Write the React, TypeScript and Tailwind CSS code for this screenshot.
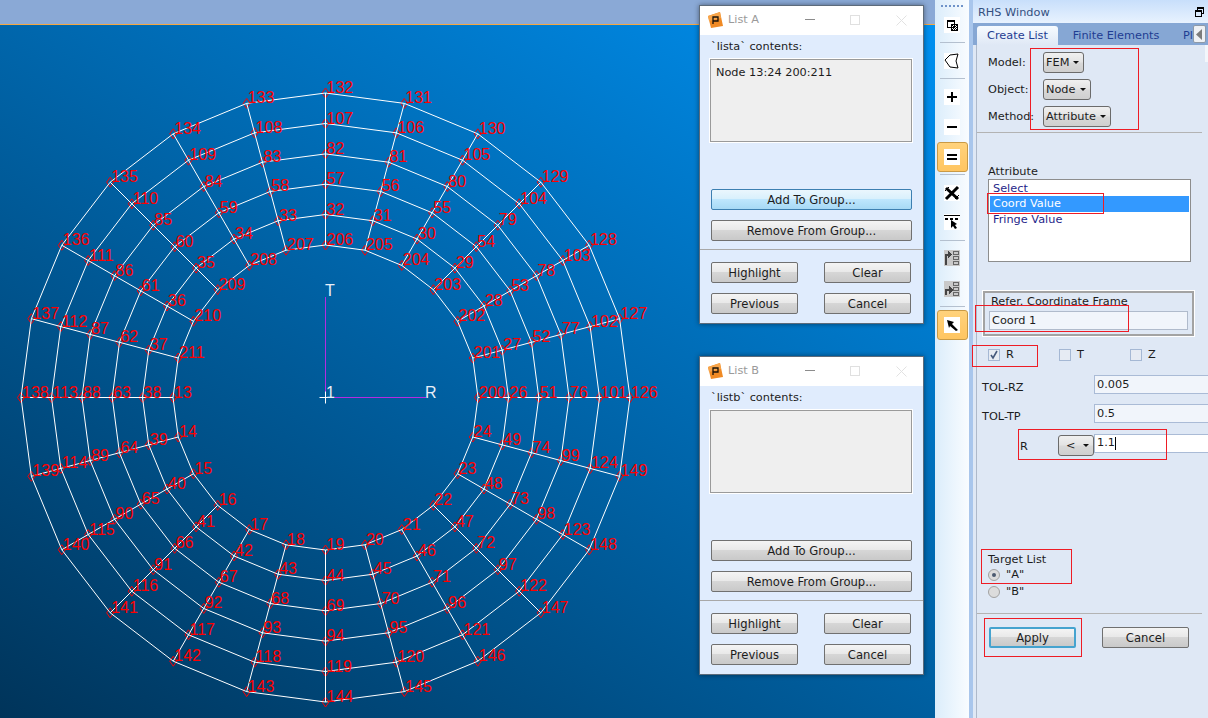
import type { ReactNode } from 'react'

const CX = 325.5
const CY = 397.5
const RADII = [152.5, 183, 213.3, 243.6, 274, 304.5]
const RING_START = [200, 26, 51, 76, 101, 126]

function nodeLabel(ring: number, k: number) {
  if (ring === 0 && k >= 12) return k + 1
  return RING_START[ring] + k
}

function nodeAt(ring: number, k: number) {
  const a = (k * 15 * Math.PI) / 180
  return { x: CX + RADII[ring] * Math.cos(a), y: CY - RADII[ring] * Math.sin(a) }
}

function Mesh() {
  const angles = Array.from({ length: 24 }, (_, k) => k)
  return (
    <svg className="block w-full h-full" viewBox="0 25 935 693">
      {/* node markers sit under the mesh lines */}
      {RADII.map((_, ring) =>
        angles.map((k) => {
          const p = nodeAt(ring, k)
          return (
            <polygon
              key={`d${ring}-${k}`}
              points={`${p.x - 3.5},${p.y} ${p.x},${p.y - 5} ${p.x + 3.5},${p.y} ${p.x},${p.y + 5}`}
              fill="none"
              stroke="#ff0000"
            />
          )
        }),
      )}
      {RADII.map((_, ring) => (
        <polygon
          key={`r${ring}`}
          points={angles.map((k) => `${nodeAt(ring, k).x},${nodeAt(ring, k).y}`).join(' ')}
          fill="none"
          stroke="#ffffff"
          strokeWidth="1"
        />
      ))}
      {angles.map((k) => {
        const a = nodeAt(0, k)
        const b = nodeAt(5, k)
        return <line key={`s${k}`} x1={a.x} y1={a.y} x2={b.x} y2={b.y} stroke="#ffffff" strokeWidth="1" />
      })}
      {RADII.map((_, ring) =>
        angles.map((k) => {
          const p = nodeAt(ring, k)
          return (
            <text
              key={`t${ring}-${k}`}
              x={p.x + 1}
              y={p.y}
              fill="#ff0000"
              fontSize="16"
              fontFamily="'Liberation Sans', sans-serif"
            >
              {nodeLabel(ring, k)}
            </text>
          )
        }),
      )}
      <line x1={CX} y1={CY} x2={CX} y2={297} stroke="#b52be0" strokeWidth="1" />
      <line x1={CX} y1={CY} x2={426} y2={CY} stroke="#b52be0" strokeWidth="1" />
      <line x1={CX - 6} y1={CY} x2={CX + 6} y2={CY} stroke="#ffffff" strokeWidth="1" />
      <line x1={CX} y1={CY - 6} x2={CX} y2={CY + 6} stroke="#ffffff" strokeWidth="1" />
      <g fill="#e8eef8" fontSize="16" fontFamily="'Liberation Sans', sans-serif">
        <text x={325} y={296}>T</text>
        <text x={425} y={398}>R</text>
        <text x={326} y={398}>1</text>
      </g>
    </svg>
  )
}

function GrayButton({ children, className }: { children: ReactNode; className: string }) {
  return (
    <div
      className={`h-[21px] flex items-center justify-center pt-[2px] text-[11.6px] rounded-[2px] border border-[#707070] bg-[linear-gradient(#f4f4f4_0%,#e9e9e9_45%,#d6d6d6_50%,#c9c9c9_100%)] text-[#1c1c1c] ${className}`}
    >
      {children}
    </div>
  )
}

function Logo() {
  return (
    <svg width="17" height="17" viewBox="0 0 17 17">
      <polygon points="1,4 13,0 16,14 4,16" fill="#f08a24" />
      <polygon points="1,4 13,0 14,6 2,9" fill="#f8a54a" />
      <path d="M6 12V5h5v4H6" fill="none" stroke="#1a1208" strokeWidth="1.3" />
    </svg>
  )
}

function ListDialog({
  title,
  name,
  contents,
  top,
  hot,
}: {
  title: string
  name: string
  contents: string
  top: string
  hot: boolean
}) {
  return (
    <div className={`absolute left-[699px] ${top} w-[225px] h-[319px] border border-[#5d6b7a] bg-[#e0ecfd] shadow-[0_0_5px_rgba(0,0,0,0.45)]`}>
      <div className="h-[29px] bg-white flex items-center pl-[7px] relative">
        <Logo />
        <span className="ml-[4px] text-[#9a9a9a]">{title}</span>
        <span className="absolute left-[105px] top-[13px] w-[10px] h-px bg-[#8c8c8c]" />
        <span className="absolute left-[150px] top-[9px] w-[10px] h-[10px] border border-[#e0e0e0]" />
        <svg className="absolute left-[196px] top-[9px]" width="11" height="11" viewBox="0 0 11 11">
          <path d="M0.5 0.5L10.5 10.5M10.5 0.5L0.5 10.5" stroke="#e2e2e2" />
        </svg>
      </div>
      <div className="h-[24px] flex items-center pt-[1px] pl-[11px] text-[#1c1c1c]">{`\`${name}\` contents:`}</div>
      <div className="ml-[10px] w-[202px] h-[83px] border border-[#9a9a9a] bg-[#efefef] px-[5px] pt-[5px] text-[#1c1c1c] shadow-[0_0_0_1px_#ffffff]">
        {contents}
      </div>
      {hot ? (
        <div className="mt-[47px] ml-[11px] w-[201px] h-[21px] flex items-center justify-center pt-[2px] text-[11.6px] rounded-[2px] border border-[#3c7fb1] bg-[linear-gradient(#eaf6fd_0%,#d9f0fc_45%,#bee6fd_50%,#a7d9f5_100%)] text-[#1c1c1c]">
          Add To Group...
        </div>
      ) : (
        <GrayButton className="mt-[47px] ml-[11px] w-[201px]">Add To Group...</GrayButton>
      )}
      <GrayButton className="mt-[10px] ml-[11px] w-[201px]">Remove From Group...</GrayButton>
      <div className="mt-[8px] h-px bg-[#a8a8a8]" />
      <div className="mt-[12px] ml-[11px] grid grid-cols-[87px_87px] gap-x-[26px] gap-y-[10px]">
        <GrayButton className="w-[87px]">Highlight</GrayButton>
        <GrayButton className="w-[87px]">Clear</GrayButton>
        <GrayButton className="w-[87px]">Previous</GrayButton>
        <GrayButton className="w-[87px]">Cancel</GrayButton>
      </div>
    </div>
  )
}

function Tool({ children, active, className, gray }: { children: ReactNode; active?: boolean; className: string; gray?: boolean }) {
  return (
    <div
      className={`w-[31px] flex items-center justify-center ${className} ${
        active ? 'rounded-[3px] border border-[#c99a45] bg-[linear-gradient(#ffd27c,#ffc561)]' : ''
      }`}
    >
      <svg width="16" height="16" viewBox="0 0 16 16" shapeRendering="crispEdges">
        <rect width="16" height="16" fill={gray ? '#c9c9c9' : '#ffffff'} />
        {children}
      </svg>
    </div>
  )
}

function ToolSep({ className }: { className: string }) {
  return <div className={`w-[25px] h-px bg-[#b4c0cf] ${className}`} />
}

function Toolbar() {
  return (
    <div className="w-[34px] flex flex-col items-center bg-[linear-gradient(90deg,#dbedfb,#f9fcff)]">
      <div className="h-[10px] flex items-center gap-[2px] pt-[1px]">
        {[0, 1, 2, 3, 4, 5].map((i) => (
          <span key={i} className="w-[2px] h-[2px] bg-[#6f93c9]" />
        ))}
      </div>
      <Tool className="h-[30px]">
        <defs>
          <pattern id="dith" width="2" height="2" patternUnits="userSpaceOnUse">
            <rect width="1" height="1" fill="#000" />
            <rect x="1" y="1" width="1" height="1" fill="#000" />
          </pattern>
        </defs>
        <rect x="3.5" y="3.5" width="7" height="7" fill="none" stroke="#000" />
        <rect x="4" y="4" width="6" height="1" fill="#000" />
        <rect x="7" y="7" width="6" height="6" fill="url(#dith)" stroke="#000" />
      </Tool>
      <ToolSep className="mt-[2px]" />
      <Tool className="h-[30px] mt-[3px]">
        <polygon points="1,7 6,2 14,1 12,8 14,15 6,14" fill="none" stroke="#000" shapeRendering="auto" />
      </Tool>
      <ToolSep className="mt-[2px]" />
      <Tool className="h-[30px] mt-[3px]">
        <rect x="3" y="7" width="10" height="2" fill="#000" />
        <rect x="7" y="3" width="2" height="10" fill="#000" />
      </Tool>
      <Tool className="h-[30px]">
        <rect x="3" y="7" width="10" height="2" fill="#000" />
      </Tool>
      <Tool className="h-[30px]" active>
        <rect x="3" y="5" width="10" height="2" fill="#000" />
        <rect x="3" y="9" width="10" height="2" fill="#000" />
      </Tool>
      <ToolSep className="mt-[2px]" />
      <Tool className="h-[29px] mt-[3px]">
        <path d="M2 3L14 14M14 2L2 14" stroke="#000" strokeWidth="3" shapeRendering="auto" />
        <path d="M1 6L5 2M11 14L15 10" stroke="#000" strokeWidth="1" shapeRendering="auto" />
      </Tool>
      <Tool className="h-[30px]">
        <rect x="0" y="1" width="16" height="1" fill="#000" />
        <rect x="1" y="4" width="3" height="2" fill="#000" />
        <rect x="6" y="4" width="3" height="2" fill="#000" />
        <rect x="11" y="4" width="3" height="2" fill="#000" />
        <polygon points="7,6 7,14 9,12 11,15 13,14 11,11 13,10" fill="#000" shapeRendering="auto" />
      </Tool>
      <ToolSep className="mt-[3px]" />
      <Tool className="h-[30px] mt-[2px]" gray>
        <path d="M2 15V5h3" fill="none" stroke="#444" strokeWidth="2" />
        <polygon points="4,1 8,5 4,8" fill="#444" />
        <rect x="9.5" y="1.5" width="5" height="3" fill="none" stroke="#666" />
        <rect x="9.5" y="6.5" width="5" height="3" fill="none" stroke="#666" />
        <rect x="9.5" y="11.5" width="5" height="3" fill="none" stroke="#666" />
      </Tool>
      <Tool className="h-[30px] mt-[1px]" gray>
        <path d="M2 14V9h4" fill="none" stroke="#444" strokeWidth="2" />
        <polygon points="5,5 9,9 5,13" fill="#444" />
        <rect x="9.5" y="1.5" width="5" height="3" fill="none" stroke="#666" />
        <rect x="9.5" y="6.5" width="5" height="3" fill="none" stroke="#666" />
        <rect x="9.5" y="11.5" width="5" height="3" fill="none" stroke="#666" />
      </Tool>
      <ToolSep className="mt-[2px]" />
      <Tool className="h-[30px] mt-[3px]" active>
        <polygon points="3,3 10,5 8,7 14,13 12,14 6,9 5,11" fill="#000" shapeRendering="auto" />
      </Tool>
    </div>
  )
}

function Caret() {
  return (
    <svg width="6" height="3" viewBox="0 0 6 3">
      <polygon points="0,0 6,0 3,3" fill="#111" />
    </svg>
  )
}

function Select({ children, className }: { children: ReactNode; className: string }) {
  return (
    <div
      className={`h-[21px] flex items-center justify-between pl-[2px] pr-[4px] rounded-[3px] border border-[#6b6b6b] bg-[linear-gradient(#f0f0f0,#e4e4e4_45%,#d8d8d8_55%,#cfcfcf)] text-[#1c1c1c] ${className}`}
    >
      <span className="pt-[1px]">{children}</span>
      <Caret />
    </div>
  )
}

function FormRow({ label, children, className }: { label: string; children: ReactNode; className?: string }) {
  return (
    <div className={`flex items-center h-[21px] ${className ?? ''}`}>
      <span className="w-[55px] pt-[1px] text-[#1c1c1c]">{label}</span>
      {children}
    </div>
  )
}

function Check({ label, checked }: { label: string; checked?: boolean }) {
  return (
    <div className="w-[71px] flex items-center">
      <span className="w-[12px] h-[12px] border border-[#a5b8d4] bg-[#e6ebf3] flex items-center justify-center">
        {checked && (
          <svg width="10" height="10" viewBox="0 0 10 10">
            <path d="M2 5l2 3 4-7" fill="none" stroke="#44587c" strokeWidth="1.6" />
          </svg>
        )}
      </span>
      <span className="ml-[6px] pt-[1px] text-[#1c1c1c]">{label}</span>
    </div>
  )
}

function Radio({ label, on }: { label: string; on?: boolean }) {
  return (
    <div className="h-[17px] flex items-center">
      <span className="w-[12px] h-[12px] rounded-full border border-[#a2a2a2] bg-[#dcdcdc] flex items-center justify-center">
        {on && <span className="w-[4px] h-[4px] rounded-full bg-[#4c5a70]" />}
      </span>
      <span className="ml-[6px] pt-[2px] text-[#1c1c1c]">{label}</span>
    </div>
  )
}

function RhsPanel() {
  return (
    <div className="flex-1 min-w-0 flex flex-col bg-[#dfe8f5] relative overflow-hidden">
      <div className="h-[23px] flex items-center justify-between pl-[5px] pr-[4px] bg-[linear-gradient(#c8dffb,#e8f2fe)] text-[#34507f]">
        <span className="pt-[3px]">RHS Window</span>
        <svg width="9" height="10" viewBox="0 0 9 10" shapeRendering="crispEdges">
          <path d="M2.5 2.5V0.5H8.5V6.5H6.5M0.5 3.5H6.5V9.5H0.5Z" fill="none" stroke="#000" />
          <rect x="2" y="0" width="7" height="2" fill="#000" />
          <rect x="0" y="3" width="7" height="2" fill="#000" />
        </svg>
      </div>
      <div className="h-[22px] bg-[#86a7d4] flex items-end pl-[4px] text-[#1f3d92] whitespace-nowrap">
        <div className="w-[81px] h-[19px] pt-[2px] rounded-t-[3px] bg-[linear-gradient(#f7fbff,#dfe8f5)] flex items-center justify-center">
          Create List
        </div>
        <div className="ml-[15px] w-[86px] h-[19px] pt-[2px] flex items-center justify-center">Finite Elements</div>
        <div className="ml-[24px] h-[19px] pt-[2px] flex items-center">Pl</div>
      </div>
      <div className="absolute left-[220px] top-[25px] w-[13px] h-[18px] rounded-[2px] border border-[#8e9aa8] bg-[#eef1f5] flex items-center justify-center">
        <svg width="7" height="11" viewBox="0 0 7 11">
          <polygon points="6,0 6,11 0,5.5" fill="#7c7c7c" />
        </svg>
      </div>
      <div className="absolute right-0 top-[45px] w-[3px] h-[17px] bg-[#f3f6fb]" />

      <div className="flex-1 ml-[3px] border-l border-[#aeb9ca] flex flex-col text-[#1c1c1c]">
        <div className="pt-[7px] pl-[11px] flex flex-col gap-[6px]">
          <FormRow label="Model:">
            <Select className="w-[41px]">FEM</Select>
          </FormRow>
          <FormRow label="Object:">
            <Select className="w-[48px]">Node</Select>
          </FormRow>
          <FormRow label="Method:">
            <Select className="w-[68px]">Attribute</Select>
          </FormRow>
        </div>
        <div className="mt-[5px] mr-[6px] h-px bg-[#b3b3b3]" />

        <div className="mt-[31px] ml-[11px] h-[14px] leading-[14px] pt-[1px]">Attribute</div>
        <div className="mt-[1px] ml-[11px] w-[203px] h-[83px] border border-[#8d8d8d] bg-white pt-[1px] px-[1px] text-[#1f1f8a]">
          <div className="h-[15px] leading-[15px] pl-[3px]">Select</div>
          <div className="h-[16px] leading-[15px] pl-[3px] bg-[#3399ff] text-white">Coord Value</div>
          <div className="h-[15px] leading-[15px] pl-[3px]">Fringe Value</div>
        </div>

        <div className="mt-[29px] ml-[6px] w-[211px] h-[45px] border-2 border-[#a3a3a3] shadow-[0_0_0_1px_#ffffff] pl-[4px]">
          <div className="h-[18px] leading-[18px] pl-[2px]">Refer. Coordinate Frame</div>
          <div className="w-[199px] h-[19px] border border-[#b0bbcc] bg-[#f1f5fb] flex items-center pl-[2px] pt-[2px]">Coord 1</div>
        </div>

        <div className="mt-[13px] ml-[11px] h-[12px] flex items-center">
          <Check label="R" checked />
          <Check label="T" />
          <Check label="Z" />
        </div>

        <div className="mt-[14px] ml-[5px] h-[19px] flex">
          <span className="w-[112px] shrink-0 pt-[5px]">TOL-RZ</span>
          <div className="w-[130px] shrink-0 border border-[#aabbd6] bg-[#f1f5fb] flex items-center pl-[2px] pt-[1px]">0.005</div>
        </div>
        <div className="mt-[10px] ml-[5px] h-[19px] flex">
          <span className="w-[112px] shrink-0 pt-[5px]">TOL-TP</span>
          <div className="w-[130px] shrink-0 border border-[#aabbd6] bg-[#f1f5fb] flex items-center pl-[2px] pt-[1px]">0.5</div>
        </div>
        <div className="mt-[11px] ml-[43px] h-[19px] flex">
          <span className="w-[38px] shrink-0 pt-[5px]">R</span>
          <Select className="w-[36px] pl-[7px] mt-[1px] shrink-0">&lt;</Select>
          <div className="w-[130px] shrink-0 border border-[#aabbd6] bg-white flex items-center pl-[2px]">
            1.1<span className="w-px h-[13px] bg-black" />
          </div>
        </div>

        <div className="mt-[99px] ml-[11px] h-[14px] leading-[14px] pt-[1px]">Target List</div>
        <div className="ml-[11px]">
          <Radio label={'"A"'} on />
          <Radio label={'"B"'} />
        </div>
        <div className="mt-[13px] mr-[6px] h-px bg-[#b3b3b3]" />
        <div className="mt-[13px] ml-[12px] flex gap-[26px]">
          <div className="w-[87px] h-[21px] flex items-center justify-center pt-[2px] text-[11.6px] rounded-[2px] border-2 border-[#45a3cf] bg-[linear-gradient(#f4f4f4_0%,#e9e9e9_45%,#d6d6d6_50%,#c9c9c9_100%)]">
            Apply
          </div>
          <GrayButton className="w-[87px]">Cancel</GrayButton>
        </div>
      </div>
    </div>
  )
}

function Callout({ className }: { className: string }) {
  return <div className={`absolute border border-[#ee1c25] pointer-events-none ${className}`} />
}

export default function App() {
  return (
    <div className="relative w-[1208px] h-[718px] overflow-hidden flex font-['DejaVu_Sans',sans-serif] text-[11.3px]">
      <div className="w-[935px] flex flex-col">
        <div className="h-[24px] bg-[#8aa9d6]" />
        <div className="h-px bg-[#f5a742]" />
        <div className="flex-1 min-h-0 bg-[linear-gradient(32deg,#00345a_0%,#0090f0_100%)]">
          <Mesh />
        </div>
      </div>
      <Toolbar />
      <div className="w-[4px] bg-[#a9c6ec]" />
      <RhsPanel />

      <ListDialog title="List A" name="lista" contents="Node 13:24 200:211" top="top-[5px]" hot />
      <ListDialog title="List B" name="listb" contents="" top="top-[356px]" hot={false} />

      <Callout className="left-[1030px] top-[48px] w-[109px] h-[82px]" />
      <Callout className="left-[987px] top-[193px] w-[117px] h-[21px]" />
      <Callout className="left-[975px] top-[305px] w-[154px] h-[27px]" />
      <Callout className="left-[972px] top-[345px] w-[66px] h-[22px]" />
      <Callout className="left-[1018px] top-[429px] w-[149px] h-[31px]" />
      <Callout className="left-[981px] top-[549px] w-[91px] h-[35px]" />
      <Callout className="left-[984px] top-[618px] w-[98px] h-[39px]" />
    </div>
  )
}
